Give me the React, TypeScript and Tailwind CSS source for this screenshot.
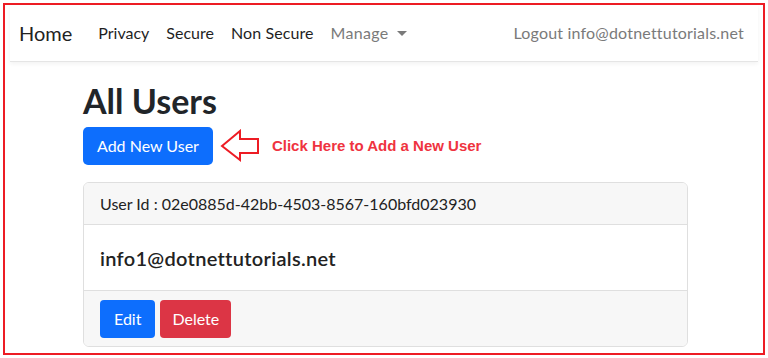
const font = { fontFamily: "Lato, 'Noto Sans', sans-serif" };

function NavBar() {
  return (
    <nav className="mx-[5px] flex h-[57px] items-center justify-between border-b border-[#e5e5e5] pl-[9px] pr-[14px] shadow-[0_2px_4px_rgba(0,0,0,0.05)]">
      <div className="flex items-center">
        <span className="mr-[26px] text-[20px] text-[#222]">Home</span>
        <ul className="flex items-center gap-[17px] text-[16px] text-[#1f1f1f]">
          <li>Privacy</li>
          <li>Secure</li>
          <li className="tracking-[0.1px]">Non Secure</li>
          <li className="flex items-center text-[#7a7a7a] tracking-[0.3px]">
            Manage
            <span className="ml-[8px] inline-block h-0 w-0 border-x-[5px] border-t-[5px] border-x-transparent border-t-[#7a7a7a]" />
          </li>
        </ul>
      </div>
      <div className="text-[16px] tracking-[0.2px] text-[#7a7a7a]">Logout info@dotnettutorials.net</div>
    </nav>
  );
}

export default function App() {
  return (
    <div className="h-[358px] w-[768px] bg-white p-[3px]" style={font}>
      <div className="h-full border-2 border-[#ed1c24] bg-white">
        <NavBar />
        <main className="pl-[78px] pr-[75px] pt-[19px]">
          <h1 className="text-[34px] font-bold leading-[40px] text-[#212529]">All Users</h1>
          <div className="mt-[6px] flex items-center">
            <button className="h-[38px] rounded-[5px] bg-[#0d6efd] px-[14px] text-[16px] text-white">
              Add New User
            </button>
            <svg width="40" height="34" viewBox="0 0 40 34" className="ml-[7px]">
              <polygon
                points="2,17 20,2 20,10 38,10 38,24 20,24 20,31"
                fill="none"
                stroke="#ed1c24"
                strokeWidth="2"
              />
            </svg>
            <span
              className="ml-[12px] text-[15px] font-bold text-[#ef3340]"
              style={{ fontFamily: "'Liberation Sans', Arial, sans-serif" }}
            >
              Click Here to Add a New User
            </span>
          </div>
          <div className="mt-[17px] overflow-hidden rounded-[6px] border border-[#dfdfdf]">
            <div className="flex h-[42px] items-center border-b border-[#dfdfdf] bg-[#f7f7f7] px-[16px] text-[16px] text-[#222]">
              User Id : 02e0885d-42bb-4503-8567-160bfd023930
            </div>
            <div className="flex h-[66px] items-center border-b border-[#dfdfdf] px-[16px]">
              <h5 className="text-[20px] font-semibold tracking-[0.3px] text-[#222]">info1@dotnettutorials.net</h5>
            </div>
            <div className="flex h-[55px] items-center gap-[5px] bg-[#f7f7f7] px-[16px]">
              <button className="h-[38px] rounded-[4px] bg-[#0d6efd] px-[14px] text-[16px] text-white">Edit</button>
              <button className="h-[38px] rounded-[4px] bg-[#dc3545] px-[12px] text-[16px] text-white">Delete</button>
            </div>
          </div>
        </main>
      </div>
    </div>
  );
}
